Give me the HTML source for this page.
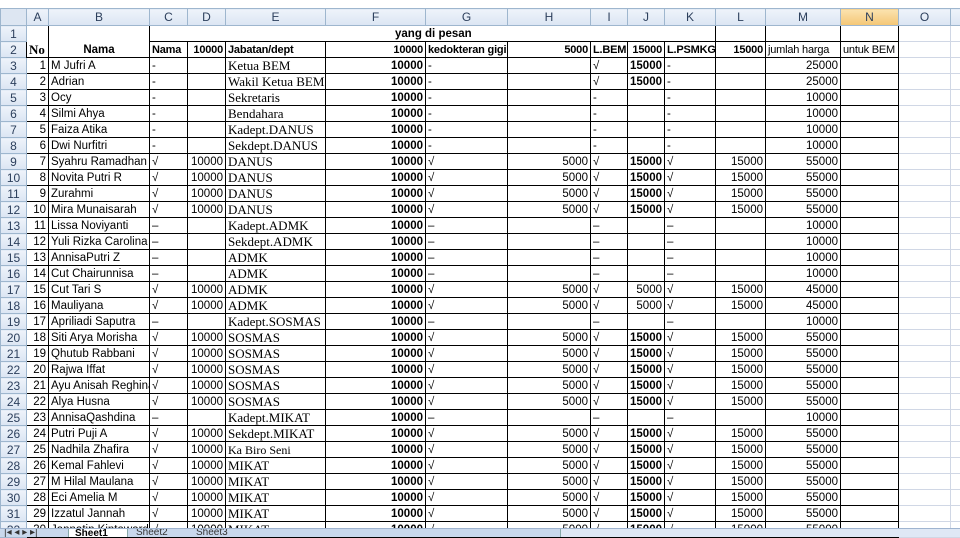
<!DOCTYPE html>
<html><head><meta charset="utf-8"><style>
html,body{margin:0;padding:0;width:960px;height:536px;overflow:hidden;background:#fff;font-family:"Liberation Sans",sans-serif}
#top{position:absolute;left:0;top:0;width:960px;height:8px;background:#fff;border-bottom:1px solid #9fb4d0}
table{position:absolute;left:0;top:8px;width:1020px;border-collapse:collapse;table-layout:fixed;font-size:11.5px}
td,th{height:16px;padding:0 2px;white-space:nowrap;overflow:hidden;line-height:14px;border:1px solid #d0d7e5;box-sizing:border-box;vertical-align:middle}
th{background:linear-gradient(#eef3fa,#dbe5f3);color:#2c3f5c;font-weight:normal;border-color:#9eb6ce;text-align:center;font-size:12px}
tr.h th{height:17px}
tr.hd td{font-size:11px;letter-spacing:-0.2px}
th.sel{background:linear-gradient(#fbe3b0,#f4c675)}
td.b{border:1px solid #000}
.r{text-align:right}.bo{font-weight:bold}.s{font-family:"Liberation Serif",serif;font-size:13px;line-height:14px}.c{text-align:center}
#tabs{position:absolute;left:0;top:528px;width:960px;height:8px;background:#c9d8ec;border-top:1px solid #9fb4d0;font-size:10px;overflow:hidden}
#tabs span{position:absolute;top:-1px;line-height:10px}
</style></head><body>
<div id="top"></div>
<table>
<colgroup><col style="width:26px"><col style="width:22px"><col style="width:101px"><col style="width:38px"><col style="width:38px"><col style="width:100px"><col style="width:100px"><col style="width:82px"><col style="width:83px"><col style="width:37px"><col style="width:37px"><col style="width:51px"><col style="width:50px"><col style="width:75px"><col style="width:58px"><col style="width:52px"><col style="width:70px"></colgroup>
<tr class="h"><th style="background:#dde6f2"></th><th>A</th><th>B</th><th>C</th><th>D</th><th>E</th><th>F</th><th>G</th><th>H</th><th>I</th><th>J</th><th>K</th><th>L</th><th>M</th><th class="sel">N</th><th>O</th><th></th></tr>
<tr><th>1</th><td class="b" rowspan="2" style="vertical-align:bottom;font-family:'Liberation Serif',serif;font-weight:bold;font-size:13px">No</td><td class="b bo c" rowspan="2" style="vertical-align:bottom">Nama</td><td class="b bo" colspan="9" style="padding-left:245px;text-align:left">yang di pesan</td><td class="b"></td><td class="b"></td><td class="b"></td><td></td><td></td></tr>
<tr class="hd"><th>2</th><td class="b bo">Nama</td><td class="b bo r">10000</td><td class="b bo">Jabatan/dept</td><td class="b bo r">10000</td><td class="b bo">kedokteran gigi</td><td class="b bo r">5000</td><td class="b bo">L.BEM</td><td class="b bo r">15000</td><td class="b bo">L.PSMKGI</td><td class="b bo r">15000</td><td class="b">jumlah harga</td><td class="b">untuk BEM</td><td></td><td></td></tr>
<tr><th>3</th><td class="b r">1</td><td class="b">M Jufri A</td><td class="b">-</td><td class="b"></td><td class="b s">Ketua BEM</td><td class="b r bo">10000</td><td class="b">-</td><td class="b"></td><td class="b">√</td><td class="b r bo">15000</td><td class="b">-</td><td class="b"></td><td class="b r">25000</td><td class="b"></td><td></td><td></td></tr>
<tr><th>4</th><td class="b r">2</td><td class="b">Adrian</td><td class="b">-</td><td class="b"></td><td class="b s">Wakil Ketua BEM</td><td class="b r bo">10000</td><td class="b">-</td><td class="b"></td><td class="b">√</td><td class="b r bo">15000</td><td class="b">-</td><td class="b"></td><td class="b r">25000</td><td class="b"></td><td></td><td></td></tr>
<tr><th>5</th><td class="b r">3</td><td class="b">Ocy</td><td class="b">-</td><td class="b"></td><td class="b s">Sekretaris</td><td class="b r bo">10000</td><td class="b">-</td><td class="b"></td><td class="b">-</td><td class="b"></td><td class="b">-</td><td class="b"></td><td class="b r">10000</td><td class="b"></td><td></td><td></td></tr>
<tr><th>6</th><td class="b r">4</td><td class="b">Silmi Ahya</td><td class="b">-</td><td class="b"></td><td class="b s">Bendahara</td><td class="b r bo">10000</td><td class="b">-</td><td class="b"></td><td class="b">-</td><td class="b"></td><td class="b">-</td><td class="b"></td><td class="b r">10000</td><td class="b"></td><td></td><td></td></tr>
<tr><th>7</th><td class="b r">5</td><td class="b">Faiza Atika</td><td class="b">-</td><td class="b"></td><td class="b s">Kadept.DANUS</td><td class="b r bo">10000</td><td class="b">-</td><td class="b"></td><td class="b">-</td><td class="b"></td><td class="b">-</td><td class="b"></td><td class="b r">10000</td><td class="b"></td><td></td><td></td></tr>
<tr><th>8</th><td class="b r">6</td><td class="b">Dwi Nurfitri</td><td class="b">-</td><td class="b"></td><td class="b s">Sekdept.DANUS</td><td class="b r bo">10000</td><td class="b">-</td><td class="b"></td><td class="b">-</td><td class="b"></td><td class="b">-</td><td class="b"></td><td class="b r">10000</td><td class="b"></td><td></td><td></td></tr>
<tr><th>9</th><td class="b r">7</td><td class="b">Syahru Ramadhan</td><td class="b">√</td><td class="b r">10000</td><td class="b s">DANUS</td><td class="b r bo">10000</td><td class="b">√</td><td class="b r">5000</td><td class="b">√</td><td class="b r bo">15000</td><td class="b">√</td><td class="b r">15000</td><td class="b r">55000</td><td class="b"></td><td></td><td></td></tr>
<tr><th>10</th><td class="b r">8</td><td class="b">Novita Putri R</td><td class="b">√</td><td class="b r">10000</td><td class="b s">DANUS</td><td class="b r bo">10000</td><td class="b">√</td><td class="b r">5000</td><td class="b">√</td><td class="b r bo">15000</td><td class="b">√</td><td class="b r">15000</td><td class="b r">55000</td><td class="b"></td><td></td><td></td></tr>
<tr><th>11</th><td class="b r">9</td><td class="b">Zurahmi</td><td class="b">√</td><td class="b r">10000</td><td class="b s">DANUS</td><td class="b r bo">10000</td><td class="b">√</td><td class="b r">5000</td><td class="b">√</td><td class="b r bo">15000</td><td class="b">√</td><td class="b r">15000</td><td class="b r">55000</td><td class="b"></td><td></td><td></td></tr>
<tr><th>12</th><td class="b r">10</td><td class="b">Mira Munaisarah</td><td class="b">√</td><td class="b r">10000</td><td class="b s">DANUS</td><td class="b r bo">10000</td><td class="b">√</td><td class="b r">5000</td><td class="b">√</td><td class="b r bo">15000</td><td class="b">√</td><td class="b r">15000</td><td class="b r">55000</td><td class="b"></td><td></td><td></td></tr>
<tr><th>13</th><td class="b r">11</td><td class="b">Lissa Noviyanti</td><td class="b">–</td><td class="b"></td><td class="b s">Kadept.ADMK</td><td class="b r bo">10000</td><td class="b">–</td><td class="b"></td><td class="b">–</td><td class="b"></td><td class="b">–</td><td class="b"></td><td class="b r">10000</td><td class="b"></td><td></td><td></td></tr>
<tr><th>14</th><td class="b r">12</td><td class="b">Yuli Rizka Carolina</td><td class="b">–</td><td class="b"></td><td class="b s">Sekdept.ADMK</td><td class="b r bo">10000</td><td class="b">–</td><td class="b"></td><td class="b">–</td><td class="b"></td><td class="b">–</td><td class="b"></td><td class="b r">10000</td><td class="b"></td><td></td><td></td></tr>
<tr><th>15</th><td class="b r">13</td><td class="b">AnnisaPutri Z</td><td class="b">–</td><td class="b"></td><td class="b s">ADMK</td><td class="b r bo">10000</td><td class="b">–</td><td class="b"></td><td class="b">–</td><td class="b"></td><td class="b">–</td><td class="b"></td><td class="b r">10000</td><td class="b"></td><td></td><td></td></tr>
<tr><th>16</th><td class="b r">14</td><td class="b">Cut Chairunnisa</td><td class="b">–</td><td class="b"></td><td class="b s">ADMK</td><td class="b r bo">10000</td><td class="b">–</td><td class="b"></td><td class="b">–</td><td class="b"></td><td class="b">–</td><td class="b"></td><td class="b r">10000</td><td class="b"></td><td></td><td></td></tr>
<tr><th>17</th><td class="b r">15</td><td class="b">Cut Tari S</td><td class="b">√</td><td class="b r">10000</td><td class="b s">ADMK</td><td class="b r bo">10000</td><td class="b">√</td><td class="b r">5000</td><td class="b">√</td><td class="b r">5000</td><td class="b">√</td><td class="b r">15000</td><td class="b r">45000</td><td class="b"></td><td></td><td></td></tr>
<tr><th>18</th><td class="b r">16</td><td class="b">Mauliyana</td><td class="b">√</td><td class="b r">10000</td><td class="b s">ADMK</td><td class="b r bo">10000</td><td class="b">√</td><td class="b r">5000</td><td class="b">√</td><td class="b r">5000</td><td class="b">√</td><td class="b r">15000</td><td class="b r">45000</td><td class="b"></td><td></td><td></td></tr>
<tr><th>19</th><td class="b r">17</td><td class="b">Apriliadi Saputra</td><td class="b">–</td><td class="b"></td><td class="b s">Kadept.SOSMAS</td><td class="b r bo">10000</td><td class="b">–</td><td class="b"></td><td class="b">–</td><td class="b"></td><td class="b">–</td><td class="b"></td><td class="b r">10000</td><td class="b"></td><td></td><td></td></tr>
<tr><th>20</th><td class="b r">18</td><td class="b">Siti Arya Morisha</td><td class="b">√</td><td class="b r">10000</td><td class="b s">SOSMAS</td><td class="b r bo">10000</td><td class="b">√</td><td class="b r">5000</td><td class="b">√</td><td class="b r bo">15000</td><td class="b">√</td><td class="b r">15000</td><td class="b r">55000</td><td class="b"></td><td></td><td></td></tr>
<tr><th>21</th><td class="b r">19</td><td class="b">Qhutub Rabbani</td><td class="b">√</td><td class="b r">10000</td><td class="b s">SOSMAS</td><td class="b r bo">10000</td><td class="b">√</td><td class="b r">5000</td><td class="b">√</td><td class="b r bo">15000</td><td class="b">√</td><td class="b r">15000</td><td class="b r">55000</td><td class="b"></td><td></td><td></td></tr>
<tr><th>22</th><td class="b r">20</td><td class="b">Rajwa Iffat</td><td class="b">√</td><td class="b r">10000</td><td class="b s">SOSMAS</td><td class="b r bo">10000</td><td class="b">√</td><td class="b r">5000</td><td class="b">√</td><td class="b r bo">15000</td><td class="b">√</td><td class="b r">15000</td><td class="b r">55000</td><td class="b"></td><td></td><td></td></tr>
<tr><th>23</th><td class="b r">21</td><td class="b">Ayu Anisah Reghina</td><td class="b">√</td><td class="b r">10000</td><td class="b s">SOSMAS</td><td class="b r bo">10000</td><td class="b">√</td><td class="b r">5000</td><td class="b">√</td><td class="b r bo">15000</td><td class="b">√</td><td class="b r">15000</td><td class="b r">55000</td><td class="b"></td><td></td><td></td></tr>
<tr><th>24</th><td class="b r">22</td><td class="b">Alya Husna</td><td class="b">√</td><td class="b r">10000</td><td class="b s">SOSMAS</td><td class="b r bo">10000</td><td class="b">√</td><td class="b r">5000</td><td class="b">√</td><td class="b r bo">15000</td><td class="b">√</td><td class="b r">15000</td><td class="b r">55000</td><td class="b"></td><td></td><td></td></tr>
<tr><th>25</th><td class="b r">23</td><td class="b">AnnisaQashdina</td><td class="b">–</td><td class="b"></td><td class="b s">Kadept.MIKAT</td><td class="b r bo">10000</td><td class="b">–</td><td class="b"></td><td class="b">–</td><td class="b"></td><td class="b">–</td><td class="b"></td><td class="b r">10000</td><td class="b"></td><td></td><td></td></tr>
<tr><th>26</th><td class="b r">24</td><td class="b">Putri Puji A</td><td class="b">√</td><td class="b r">10000</td><td class="b s">Sekdept.MIKAT</td><td class="b r bo">10000</td><td class="b">√</td><td class="b r">5000</td><td class="b">√</td><td class="b r bo">15000</td><td class="b">√</td><td class="b r">15000</td><td class="b r">55000</td><td class="b"></td><td></td><td></td></tr>
<tr><th>27</th><td class="b r">25</td><td class="b">Nadhila Zhafira</td><td class="b">√</td><td class="b r">10000</td><td class="b s" style="font-size:12px">Ka Biro Seni</td><td class="b r bo">10000</td><td class="b">√</td><td class="b r">5000</td><td class="b">√</td><td class="b r bo">15000</td><td class="b">√</td><td class="b r">15000</td><td class="b r">55000</td><td class="b"></td><td></td><td></td></tr>
<tr><th>28</th><td class="b r">26</td><td class="b">Kemal Fahlevi</td><td class="b">√</td><td class="b r">10000</td><td class="b s">MIKAT</td><td class="b r bo">10000</td><td class="b">√</td><td class="b r">5000</td><td class="b">√</td><td class="b r bo">15000</td><td class="b">√</td><td class="b r">15000</td><td class="b r">55000</td><td class="b"></td><td></td><td></td></tr>
<tr><th>29</th><td class="b r">27</td><td class="b">M Hilal Maulana</td><td class="b">√</td><td class="b r">10000</td><td class="b s">MIKAT</td><td class="b r bo">10000</td><td class="b">√</td><td class="b r">5000</td><td class="b">√</td><td class="b r bo">15000</td><td class="b">√</td><td class="b r">15000</td><td class="b r">55000</td><td class="b"></td><td></td><td></td></tr>
<tr><th>30</th><td class="b r">28</td><td class="b">Eci Amelia M</td><td class="b">√</td><td class="b r">10000</td><td class="b s">MIKAT</td><td class="b r bo">10000</td><td class="b">√</td><td class="b r">5000</td><td class="b">√</td><td class="b r bo">15000</td><td class="b">√</td><td class="b r">15000</td><td class="b r">55000</td><td class="b"></td><td></td><td></td></tr>
<tr><th>31</th><td class="b r">29</td><td class="b">Izzatul Jannah</td><td class="b">√</td><td class="b r">10000</td><td class="b s">MIKAT</td><td class="b r bo">10000</td><td class="b">√</td><td class="b r">5000</td><td class="b">√</td><td class="b r bo">15000</td><td class="b">√</td><td class="b r">15000</td><td class="b r">55000</td><td class="b"></td><td></td><td></td></tr>
<tr><th>32</th><td class="b r">30</td><td class="b">Jannatin Kintawardhani</td><td class="b">√</td><td class="b r">10000</td><td class="b s">MIKAT</td><td class="b r bo">10000</td><td class="b">√</td><td class="b r">5000</td><td class="b">√</td><td class="b r bo">15000</td><td class="b">√</td><td class="b r">15000</td><td class="b r">55000</td><td class="b"></td><td></td><td></td></tr>
</table>
<div id="tabs">
<span style="left:4px;color:#333">|◂ ◂ ▸ ▸|</span>
<span style="left:68px;width:52px;height:10px;background:#fff;border:1px solid #8aa;font-weight:bold;padding-left:6px">Sheet1</span>
<span style="left:136px;color:#333">Sheet2</span>
<span style="left:196px;color:#333">Sheet3</span>
<span style="left:560px;width:400px;height:10px;background:#dfe8f5;border-left:1px solid #8aa"></span>
</div>
</body></html>
